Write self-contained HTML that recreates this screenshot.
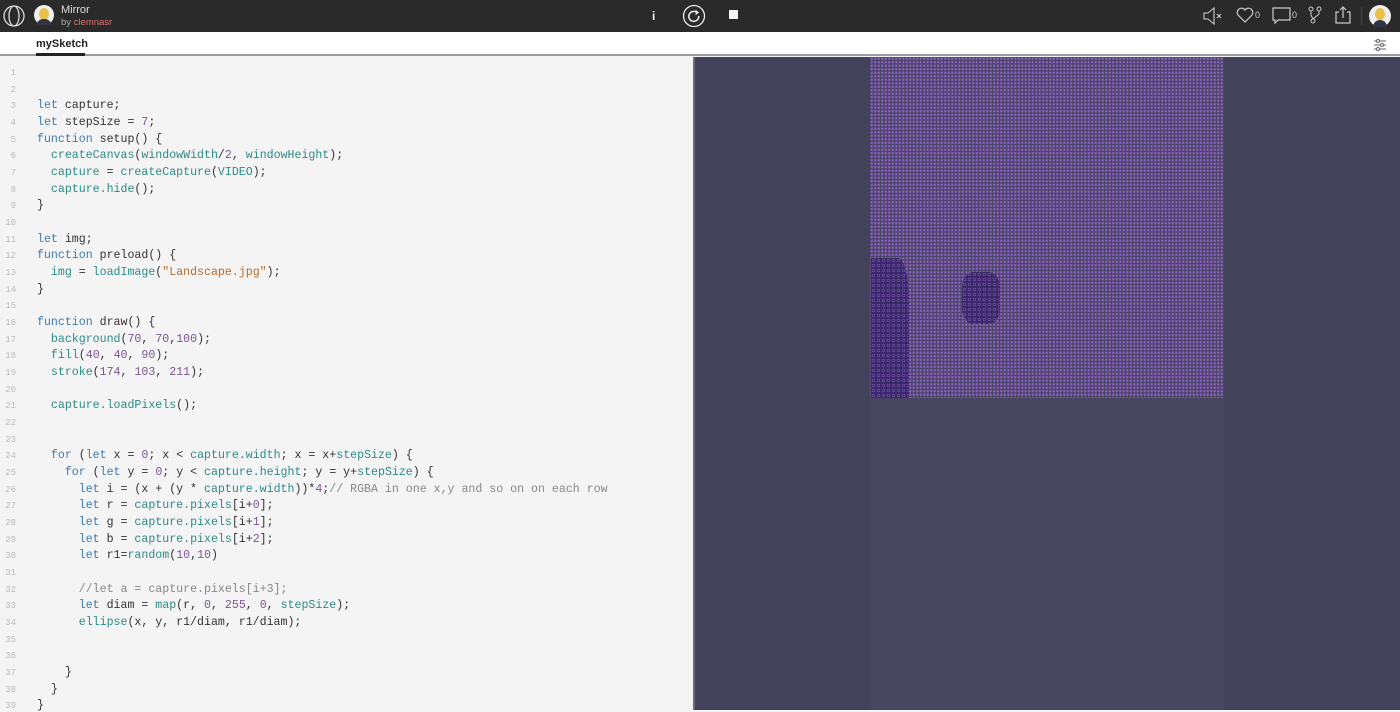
<!DOCTYPE html>
<html><head><meta charset="utf-8"><style>
*{margin:0;padding:0;box-sizing:border-box}
body{width:1400px;height:710px;overflow:hidden;font-family:"Liberation Sans",sans-serif;background:#f4f4f4;position:relative}
#top{position:absolute;left:0;top:0;width:1400px;height:32px;background:#2a2a2a;color:#ddd}
#tabs{position:absolute;left:0;top:32px;width:1400px;height:24px;background:#fff;border-bottom:2px solid #9a9a9a}
#code{position:absolute;left:0;top:60px;width:693px;height:650px;background:#f4f4f4;font-family:"Liberation Mono",monospace;font-size:11.6px;color:#333}
.ln{position:absolute;left:0;width:16px;text-align:right;color:#bbb;font-size:9px}
.l{position:absolute;left:37px;white-space:pre}
.k{color:#3f7cae}.f{color:#2c8b86}.n{color:#7d5595}.s{color:#b86a2c}.c{color:#888}
#canvas{position:absolute;left:693px;top:57px;width:707px;height:653px;background:#42425b;border-left:2px solid #6a6a7a}
#mid{position:absolute;left:870px;top:57px;width:354px;height:653px;background:#46465f}
#dots{position:absolute;left:870px;top:57px;width:354px;height:341px;background-color:#4c4568;
background-image:radial-gradient(circle,#8a63c0 0.9px,transparent 1.5px);background-size:3.5px 3.5px}
.blob{position:absolute;background-color:#3a2a6a;background-image:radial-gradient(circle,#2a1d5a 0.8px,#a06ad8 1.2px,transparent 1.8px);background-size:5px 5px}
</style></head><body>
<div id="top">
<svg style="position:absolute;left:2px;top:4px" width="24" height="24" viewBox="0 0 24 24"><circle cx="12" cy="12" r="10" fill="none" stroke="#ddd" stroke-width="1.3"/><ellipse cx="12" cy="12" rx="5" ry="10" fill="none" stroke="#ddd" stroke-width="1.3"/></svg>
<div style="position:absolute;left:34px;top:5px;width:20px;height:20px;border-radius:50%;background:#f0f0f0"><div style="position:absolute;left:5px;top:3px;width:10px;height:12px;border-radius:50%;background:#e8c04a"></div><div style="position:absolute;left:3px;top:14px;width:14px;height:6px;border-radius:7px 7px 0 0;background:#334"></div></div>
<div style="position:absolute;left:61px;top:4px;font-size:11px;color:#ddd">Mirror</div>
<div style="position:absolute;left:61px;top:17px;font-size:9.5px;color:#aaa">by <span style="color:#e07070">clemnasr</span></div>
<div style="position:absolute;left:652px;top:9px;font-size:12px;font-weight:bold;color:#eee">i</div>
<svg style="position:absolute;left:682px;top:4px" width="24" height="24" viewBox="0 0 24 24"><circle cx="12" cy="12" r="10.5" fill="none" stroke="#eee" stroke-width="1.3"/><path d="M15 8.5A5 5 0 1 0 16.8 12" fill="none" stroke="#eee" stroke-width="1.5"/><path d="M13.5 6.5L16 8.5L13.5 10.5" fill="none" stroke="#eee" stroke-width="1.3"/></svg>
<div style="position:absolute;left:729px;top:10px;width:9px;height:9px;background:#f4f4f4"></div>
<svg style="position:absolute;left:1202px;top:6px" width="24" height="20" viewBox="0 0 24 20"><path d="M2 7h4l6-5v16l-6-5H2z" fill="none" stroke="#ccc" stroke-width="1.1"/><path d="M15 8l4 4M19 8l-4 4" stroke="#ccc" stroke-width="1.1"/></svg>
<svg style="position:absolute;left:1236px;top:7px" width="18" height="16" viewBox="0 0 18 16"><path d="M9 15L2 8A4 4 0 0 1 9 3A4 4 0 0 1 16 8z" fill="none" stroke="#ccc" stroke-width="1.2"/></svg>
<span style="position:absolute;left:1255px;top:10px;font-size:9px;color:#ccc">0</span>
<svg style="position:absolute;left:1272px;top:7px" width="20" height="18" viewBox="0 0 20 18"><path d="M1 1h17v12H6l-3 3v-3H1z" fill="none" stroke="#ccc" stroke-width="1.2"/></svg>
<span style="position:absolute;left:1292px;top:10px;font-size:9px;color:#ccc">0</span>
<svg style="position:absolute;left:1308px;top:6px" width="14" height="18" viewBox="0 0 14 18"><circle cx="3" cy="3" r="2" fill="none" stroke="#ccc"/><circle cx="11" cy="3" r="2" fill="none" stroke="#ccc"/><circle cx="5" cy="15" r="2" fill="none" stroke="#ccc"/><path d="M3 5v4l2 4M11 5v3l-6 5" fill="none" stroke="#ccc"/></svg>
<svg style="position:absolute;left:1334px;top:6px" width="18" height="18" viewBox="0 0 18 18"><path d="M5 6H2v11h14V6h-3M9 12V1M6 4l3-3 3 3" fill="none" stroke="#ccc" stroke-width="1.2"/></svg>
<div style="position:absolute;left:1361px;top:7px;width:1px;height:18px;background:#444"></div>
<div style="position:absolute;left:1369px;top:5px;width:22px;height:22px;border-radius:50%;background:#f0f0f0"><div style="position:absolute;left:6px;top:3px;width:10px;height:12px;border-radius:50%;background:#e8c04a"></div><div style="position:absolute;left:4px;top:15px;width:14px;height:7px;border-radius:7px 7px 0 0;background:#334"></div></div>
</div>
<div id="tabs">
<div style="position:absolute;left:36px;top:6px;font-size:11px;font-weight:bold;color:#222">mySketch</div>
<div style="position:absolute;left:36px;top:21px;width:49px;height:3px;background:#222"></div>
<svg style="position:absolute;left:1373px;top:6px" width="14" height="14" viewBox="0 0 14 14"><path d="M1 3h12M1 7h12M1 11h12" stroke="#666"/><circle cx="5" cy="3" r="1.5" fill="#fff" stroke="#666"/><circle cx="9" cy="7" r="1.5" fill="#fff" stroke="#666"/><circle cx="5" cy="11" r="1.5" fill="#fff" stroke="#666"/></svg>
</div>
<div id="code">
<div class="ln" style="top:8px">1</div><div class="ln" style="top:25px">2</div><div class="ln" style="top:41px">3</div><div class="ln" style="top:58px">4</div><div class="ln" style="top:75px">5</div><div class="ln" style="top:91px">6</div><div class="ln" style="top:108px">7</div><div class="ln" style="top:125px">8</div><div class="ln" style="top:141px">9</div><div class="ln" style="top:158px">10</div><div class="ln" style="top:175px">11</div><div class="ln" style="top:191px">12</div><div class="ln" style="top:208px">13</div><div class="ln" style="top:225px">14</div><div class="ln" style="top:241px">15</div><div class="ln" style="top:258px">16</div><div class="ln" style="top:275px">17</div><div class="ln" style="top:291px">18</div><div class="ln" style="top:308px">19</div><div class="ln" style="top:325px">20</div><div class="ln" style="top:341px">21</div><div class="ln" style="top:358px">22</div><div class="ln" style="top:375px">23</div><div class="ln" style="top:391px">24</div><div class="ln" style="top:408px">25</div><div class="ln" style="top:425px">26</div><div class="ln" style="top:441px">27</div><div class="ln" style="top:458px">28</div><div class="ln" style="top:475px">29</div><div class="ln" style="top:491px">30</div><div class="ln" style="top:508px">31</div><div class="ln" style="top:525px">32</div><div class="ln" style="top:541px">33</div><div class="ln" style="top:558px">34</div><div class="ln" style="top:575px">35</div><div class="ln" style="top:591px">36</div><div class="ln" style="top:608px">37</div><div class="ln" style="top:625px">38</div><div class="ln" style="top:641px">39</div>
<div class="l" style="top:39px"><span class="k">let</span> capture;</div>
<div class="l" style="top:56px"><span class="k">let</span> stepSize = <span class="n">7</span>;</div>
<div class="l" style="top:73px"><span class="k">function</span> setup() {</div>
<div class="l" style="top:89px">  <span class="f">createCanvas</span>(<span class="f">windowWidth</span>/<span class="n">2</span>, <span class="f">windowHeight</span>);</div>
<div class="l" style="top:106px">  <span class="f">capture</span> = <span class="f">createCapture</span>(<span class="f">VIDEO</span>);</div>
<div class="l" style="top:123px">  <span class="f">capture.hide</span>();</div>
<div class="l" style="top:139px">}</div>
<div class="l" style="top:173px"><span class="k">let</span> img;</div>
<div class="l" style="top:189px"><span class="k">function</span> preload() {</div>
<div class="l" style="top:206px">  <span class="f">img</span> = <span class="f">loadImage</span>(<span class="s">"Landscape.jpg"</span>);</div>
<div class="l" style="top:223px">}</div>
<div class="l" style="top:256px"><span class="k">function</span> draw() {</div>
<div class="l" style="top:273px">  <span class="f">background</span>(<span class="n">70</span>, <span class="n">70</span>,<span class="n">100</span>);</div>
<div class="l" style="top:289px">  <span class="f">fill</span>(<span class="n">40</span>, <span class="n">40</span>, <span class="n">90</span>);</div>
<div class="l" style="top:306px">  <span class="f">stroke</span>(<span class="n">174</span>, <span class="n">103</span>, <span class="n">211</span>);</div>
<div class="l" style="top:339px">  <span class="f">capture.loadPixels</span>();</div>
<div class="l" style="top:389px">  <span class="k">for</span> (<span class="k">let</span> x = <span class="n">0</span>; x &lt; <span class="f">capture.width</span>; x = x+<span class="f">stepSize</span>) {</div>
<div class="l" style="top:406px">    <span class="k">for</span> (<span class="k">let</span> y = <span class="n">0</span>; y &lt; <span class="f">capture.height</span>; y = y+<span class="f">stepSize</span>) {</div>
<div class="l" style="top:423px">      <span class="k">let</span> i = (x + (y * <span class="f">capture.width</span>))*<span class="n">4</span>;<span class="c">// RGBA in one x,y and so on on each row</span></div>
<div class="l" style="top:439px">      <span class="k">let</span> r = <span class="f">capture.pixels</span>[i+<span class="n">0</span>];</div>
<div class="l" style="top:456px">      <span class="k">let</span> g = <span class="f">capture.pixels</span>[i+<span class="n">1</span>];</div>
<div class="l" style="top:473px">      <span class="k">let</span> b = <span class="f">capture.pixels</span>[i+<span class="n">2</span>];</div>
<div class="l" style="top:489px">      <span class="k">let</span> r1=<span class="f">random</span>(<span class="n">10</span>,<span class="n">10</span>)</div>
<div class="l" style="top:523px">      <span class="c">//let a = capture.pixels[i+3];</span></div>
<div class="l" style="top:539px">      <span class="k">let</span> diam = <span class="f">map</span>(r, <span class="n">0</span>, <span class="n">255</span>, <span class="n">0</span>, <span class="f">stepSize</span>);</div>
<div class="l" style="top:556px">      <span class="f">ellipse</span>(x, y, r1/diam, r1/diam);</div>
<div class="l" style="top:606px">    }</div>
<div class="l" style="top:623px">  }</div>
<div class="l" style="top:639px">}</div>
</div>
<div id="canvas"></div>
<div id="mid"></div>
<div id="dots"></div>
<div class="blob" style="left:871px;top:258px;width:38px;height:140px;border-radius:0 30% 0 0"></div>
<div class="blob" style="left:962px;top:272px;width:38px;height:52px;border-radius:30%"></div>
</body></html>
